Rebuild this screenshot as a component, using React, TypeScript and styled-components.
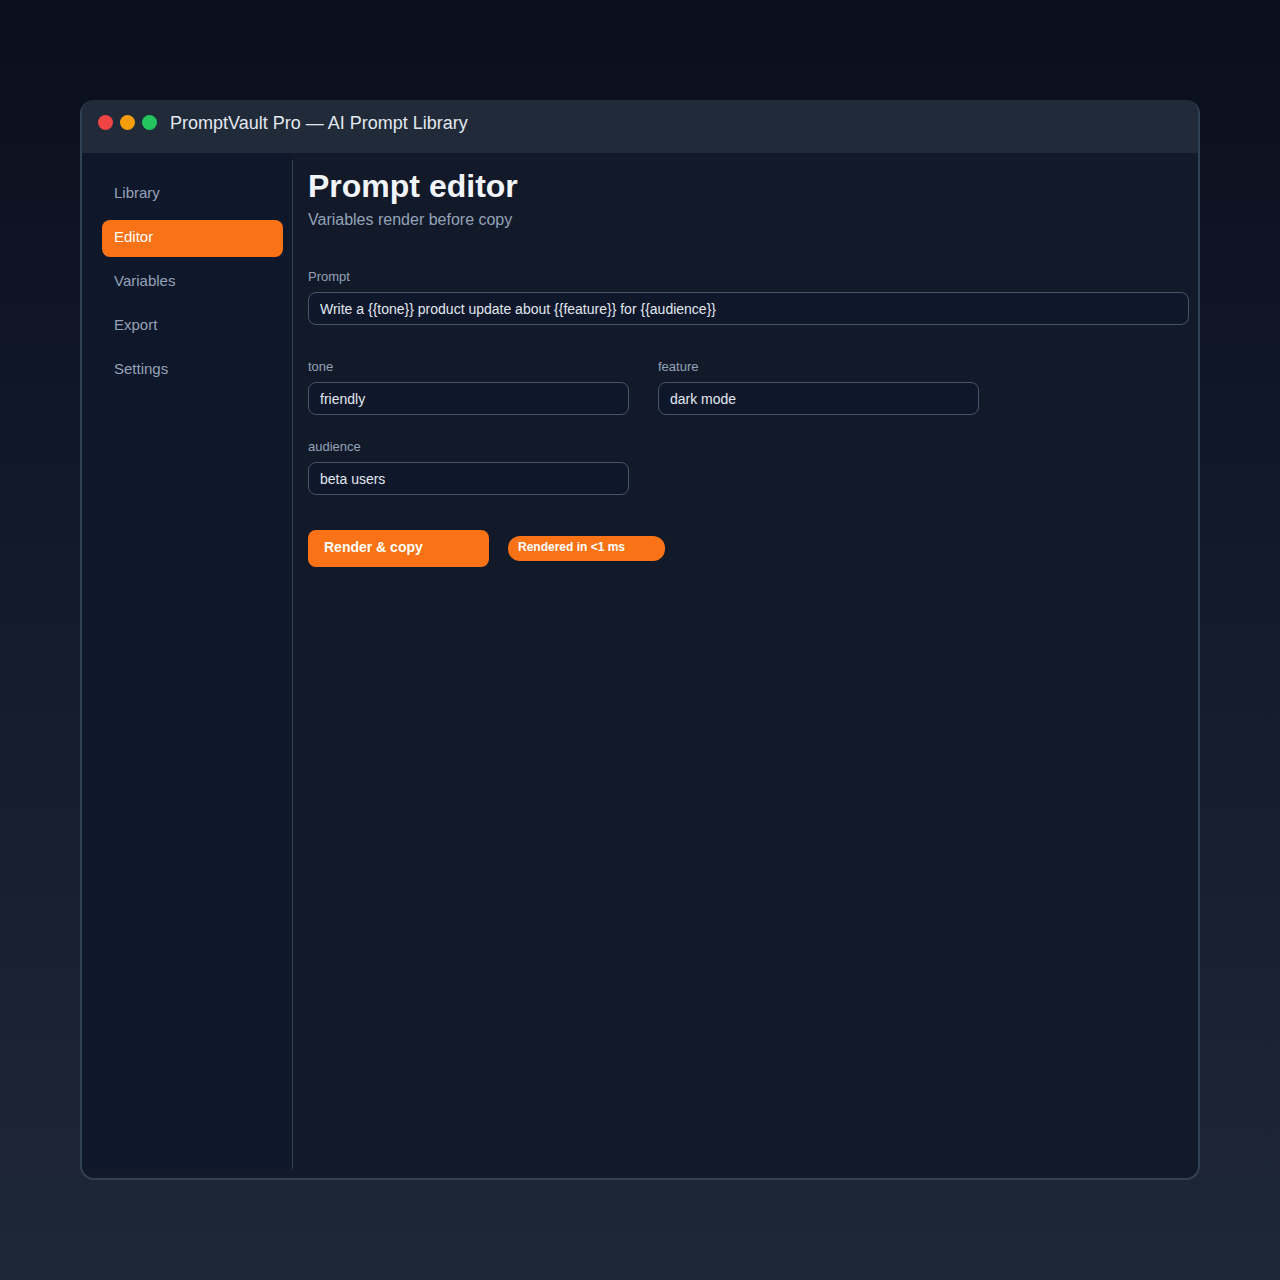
import styled, { createGlobalStyle } from "styled-components";

const GlobalStyle = createGlobalStyle`
    html, body {
        margin: 0;
        padding: 0;
    }
    body {
        font-family: "Liberation Sans", Arial, sans-serif;
        background: linear-gradient(180deg, #0a0f1e 0%, #1e2738 100%);
        min-height: 1280px;
    }
`

const navItems = ["Library", "Editor", "Variables", "Export", "Settings"];

const vars = [
    { name: "tone", value: "friendly" },
    { name: "feature", value: "dark mode" },
    { name: "audience", value: "beta users" },
];

export default function App() {
    return (
        <>
            <GlobalStyle />
            <Page>
                <Window>
                    <TitleBar>
                        <Dots>
                            <Dot color="#ef4444" />
                            <Dot color="#f59e0b" />
                            <Dot color="#22c55e" />
                        </Dots>
                        <WindowTitle>PromptVault Pro — AI Prompt Library</WindowTitle>
                    </TitleBar>
                    <Body>
                        <Sidebar>
                            {navItems.map((item) => (
                                <NavItem key={item} active={item === "Editor"}>
                                    {item}
                                </NavItem>
                            ))}
                        </Sidebar>
                        <Main>
                            <Heading>Prompt editor</Heading>
                            <Subtitle>Variables render before copy</Subtitle>

                            <Field>
                                <Label>Prompt</Label>
                                <Input>Write a {"{{tone}}"} product update about {"{{feature}}"} for {"{{audience}}"}</Input>
                            </Field>

                            <VarGrid>
                                {vars.map((v) => (
                                    <Field key={v.name}>
                                        <Label>{v.name}</Label>
                                        <Input>{v.value}</Input>
                                    </Field>
                                ))}
                            </VarGrid>

                            <Actions>
                                <PrimaryButton>Render &amp; copy</PrimaryButton>
                                <Badge>Rendered in &lt;1 ms</Badge>
                            </Actions>
                        </Main>
                    </Body>
                </Window>
            </Page>
        </>
    );
}

const Page = styled.div`
    padding: 100px 80px;
`
const Window = styled.div`
    height: 1080px;
    box-sizing: border-box;
    border: 2px solid #334155;
    border-top: none;
    border-radius: 14px;
    background: #121a2a;
    overflow: hidden;
    display: flex;
    flex-direction: column;
`
const TitleBar = styled.div`
    height: 53px;
    box-sizing: border-box;
    flex-shrink: 0;
    background: #212a39;
    display: flex;
    align-items: flex-start;
    padding: 14px 0 0 18px;
    gap: 13px;
    margin: 0 -2px;
`
const Dots = styled.div`
    display: flex;
    gap: 7px;
    padding-top: 1px;
`
const Dot = styled.span<{ color: string }>`
    width: 15px;
    height: 15px;
    border-radius: 50%;
    background: ${(p) => p.color};
`
const WindowTitle = styled.span`
    font-size: 18px;
    line-height: 18px;
    color: #e2e8f0;
`
const Body = styled.div`
    flex: 1;
    display: flex;
    padding: 0 9px 9px 0;
`
const Sidebar = styled.nav`
    width: 210px;
    flex-shrink: 0;
    box-sizing: border-box;
    background: #0f172a;
    padding: 23px 9px 0 20px;
    display: flex;
    flex-direction: column;
    gap: 7px;
`
const NavItem = styled.div<{ active?: boolean }>`
    height: 37px;
    box-sizing: border-box;
    display: flex;
    align-items: center;
    padding: 0 12px 4px;
    border-radius: 8px;
    font-size: 15px;
    color: ${(p) => (p.active ? "#ffffff" : "#94a3b8")};
    background: ${(p) => (p.active ? "#f97316" : "transparent")};
`
const Main = styled.main`
    flex: 1;
    margin-top: 7px;
    border-left: 1px solid #334155;
    padding: 7px 0 0 15px;
    display: flex;
    flex-direction: column;
`
const Heading = styled.h1`
    margin: 0;
    font-size: 32px;
    line-height: 38px;
    font-weight: 700;
    color: #f1f5f9;
`
const Subtitle = styled.p`
    margin: 5px 0 0;
    font-size: 16px;
    line-height: 20px;
    color: #94a3b8;
`
const Field = styled.div`
    display: flex;
    flex-direction: column;
    gap: 7px;
    margin-top: 39px;
`
const Label = styled.label`
    font-size: 13px;
    line-height: 16px;
    color: #94a3b8;
`
const Input = styled.div`
    height: 33px;
    box-sizing: border-box;
    border: 1px solid #475569;
    border-radius: 8px;
    background: #0f172a;
    padding: 1px 11px 0;
    display: flex;
    align-items: center;
    font-size: 14px;
    color: #e2e8f0;
`
const VarGrid = styled.div`
    display: grid;
    grid-template-columns: 321px 321px;
    column-gap: 29px;

    ${Field} {
        margin-top: 34px;
    }

    ${Field} + ${Field} + ${Field} {
        margin-top: 24px;
    }
`
const Actions = styled.div`
    display: flex;
    align-items: center;
    gap: 19px;
    margin-top: 35px;
`
const PrimaryButton = styled.button`
    width: 181px;
    height: 37px;
    border: none;
    border-radius: 8px;
    background: #f97316;
    color: #ffffff;
    font-family: inherit;
    font-size: 14px;
    font-weight: 700;
    text-align: left;
    padding: 0 16px 4px;
`
const Badge = styled.span`
    width: 157px;
    height: 25px;
    box-sizing: border-box;
    display: flex;
    align-items: center;
    padding: 0 10px 3px;
    border-radius: 12px;
    background: #f97316;
    color: #ffffff;
    font-size: 12px;
    font-weight: 700;
`
